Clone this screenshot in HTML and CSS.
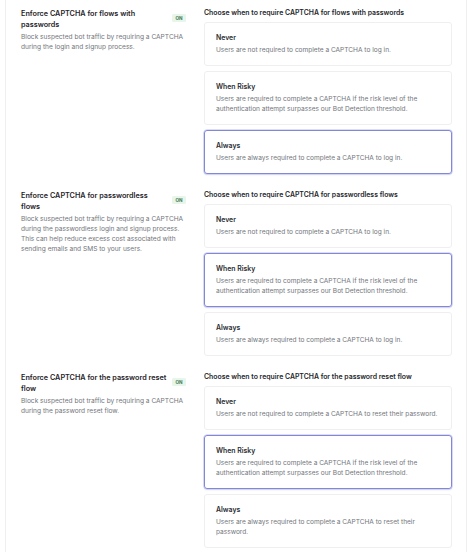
FILE: index.html
```html
<!DOCTYPE html>
<html lang="en">
<head>
<meta charset="utf-8">
<title>CAPTCHA settings</title>
<link rel="stylesheet" href="styles.css">
</head>
<body>
<div class="panel">
  <section class="setting">
    <div class="info">
      <div class="info-head">
        <h3 class="title">Enforce CAPTCHA for flows with passwords</h3>
        <span class="badge">ON</span>
      </div>
      <p class="desc">Block suspected bot traffic by requiring a CAPTCHA during the login and signup process.</p>
    </div>
    <div class="choices">
      <div class="choices-title">Choose when to require CAPTCHA for flows with passwords</div>
      <div class="option">
        <div class="opt-label">Never</div>
        <div class="opt-desc">Users are not required to complete a CAPTCHA to log in.</div>
      </div>
      <div class="option">
        <div class="opt-label">When Risky</div>
        <div class="opt-desc">Users are required to complete a CAPTCHA if the risk level of the authentication attempt surpasses our Bot Detection threshold.</div>
      </div>
      <div class="option selected">
        <div class="opt-label">Always</div>
        <div class="opt-desc">Users are always required to complete a CAPTCHA to log in.</div>
      </div>
    </div>
  </section>

  <section class="setting">
    <div class="info">
      <div class="info-head">
        <h3 class="title">Enforce CAPTCHA for passwordless flows</h3>
        <span class="badge">ON</span>
      </div>
      <p class="desc">Block suspected bot traffic by requiring a CAPTCHA during the passwordless login and signup process. This can help reduce excess cost associated with sending emails and SMS to your users.</p>
    </div>
    <div class="choices">
      <div class="choices-title">Choose when to require CAPTCHA for passwordless flows</div>
      <div class="option">
        <div class="opt-label">Never</div>
        <div class="opt-desc">Users are not required to complete a CAPTCHA to log in.</div>
      </div>
      <div class="option selected">
        <div class="opt-label">When Risky</div>
        <div class="opt-desc">Users are required to complete a CAPTCHA if the risk level of the authentication attempt surpasses our Bot Detection threshold.</div>
      </div>
      <div class="option">
        <div class="opt-label">Always</div>
        <div class="opt-desc">Users are always required to complete a CAPTCHA to log in.</div>
      </div>
    </div>
  </section>

  <section class="setting">
    <div class="info">
      <div class="info-head">
        <h3 class="title">Enforce CAPTCHA for the password reset flow</h3>
        <span class="badge">ON</span>
      </div>
      <p class="desc">Block suspected bot traffic by requiring a CAPTCHA during the password reset flow.</p>
    </div>
    <div class="choices">
      <div class="choices-title">Choose when to require CAPTCHA for the password reset flow</div>
      <div class="option">
        <div class="opt-label">Never</div>
        <div class="opt-desc">Users are not required to complete a CAPTCHA to reset their password.</div>
      </div>
      <div class="option selected">
        <div class="opt-label">When Risky</div>
        <div class="opt-desc">Users are required to complete a CAPTCHA if the risk level of the authentication attempt surpasses our Bot Detection threshold.</div>
      </div>
      <div class="option">
        <div class="opt-label">Always</div>
        <div class="opt-desc">Users are always required to complete a CAPTCHA to reset their password.</div>
      </div>
    </div>
  </section>
</div>
</body>
</html>
```

FILE: styles.css
```css
* { box-sizing: border-box; }
html, body {
  margin: 0;
  padding: 0;
  background: #ffffff;
}
body {
  font-family: Inter, "Noto Sans", "Liberation Sans", sans-serif;
  color: #1f2328;
}
.panel {
  margin: 0 7px 0 5px;
  border-left: 1px solid #efefef;
  border-right: 1px solid #efefef;
  padding: 8px 14px 6px 15px;
  display: flex;
  flex-direction: column;
  gap: 16px;
  min-height: 552px;
}
.setting {
  display: grid;
  grid-template-columns: 165px 1fr;
  column-gap: 18px;
}
.info-head {
  display: flex;
  align-items: flex-start;
  gap: 4.5px;
}
.title {
  flex: 1;
  margin: 0;
  font-size: 7.25px;
  line-height: 11.3px;
  font-weight: 600;
  color: #1f2328;
}
.badge {
  flex: none;
  margin-top: 6px;
  width: 14px;
  height: 8px;
  display: flex;
  align-items: center;
  justify-content: center;
  background: #e7f5ea;
  color: #3d7a52;
  font-size: 4.6px;
  font-weight: 700;
  border-radius: 1.5px;
  letter-spacing: 0.1px;
}
.desc {
  margin: 1px 0 0;
  font-size: 6.6px;
  line-height: 10px;
  color: #72757b;
}
.choices {
  display: flex;
  flex-direction: column;
  gap: 5px;
}
.choices-title {
  font-size: 6.9px;
  line-height: 10px;
  font-weight: 600;
  color: #24272b;
  margin-bottom: -1px;
}
.option {
  border: 1px solid #efefef;
  border-radius: 3px;
  padding: 10px 11px;
  display: flex;
  flex-direction: column;
  gap: 2px;
}
.option.selected {
  border-color: #8387d8;
  box-shadow: 0 0 0 0.5px #b9bbe9, 0 1px 2px rgba(60, 60, 120, 0.12);
}
.opt-label {
  font-size: 6.9px;
  line-height: 10px;
  font-weight: 600;
  color: #2a2d31;
}
.opt-desc {
  font-size: 6.55px;
  line-height: 10px;
  color: #72757b;
}
```
